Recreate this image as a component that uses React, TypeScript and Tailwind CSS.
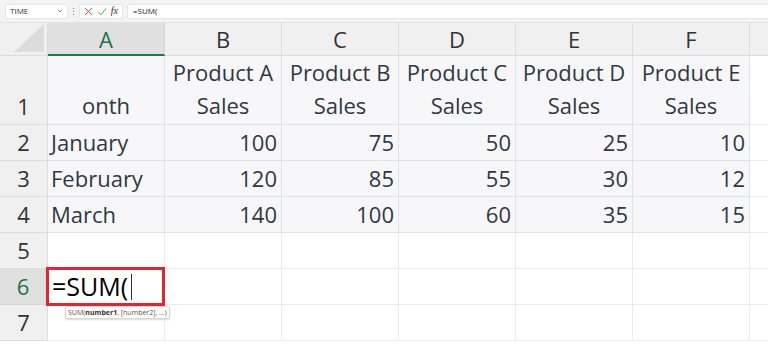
import { ChevronDown } from "lucide-react";

const COLS = ["A", "B", "C", "D", "E", "F"];

// 表のデータ（行1は見出し）
const HEAD = ["onth", "Product A Sales", "Product B Sales", "Product C Sales", "Product D Sales", "Product E Sales"];
const DATA: (string | number)[][] = [
  ["January", 100, 75, 50, 25, 10],
  ["February", 120, 85, 55, 30, 12],
  ["March", 140, 100, 60, 35, 15],
];

const FONT = { fontFamily: '"Open Sans", "Noto Sans", sans-serif' };

function FormulaBar() {
  return (
    <div className="flex h-[23px] items-center border-b border-[#e3e3e3] bg-[#f3f3f3] pl-[5px]">
      <div className="flex h-[15px] w-[63px] items-center justify-between rounded-[2px] border border-[#e6e6e6] bg-white pl-[4px] pr-[3px] text-[8px] text-[#333]">
        <span>TIME</span>
        <ChevronDown size={8} strokeWidth={2} className="text-[#555]" />
      </div>
      <span className="mx-[1px] w-[9px] text-center text-[9px] leading-none text-[#777]">⋮</span>
      <div className="flex h-[15px] w-[44px] items-center justify-around rounded-[2px] border border-[#e6e6e6] bg-white px-[2px]">
        <svg width="9" height="9" viewBox="0 0 10 10">
          <path d="M1 1 L9 9 M9 1 L1 9" stroke="#d8453e" strokeWidth="1.1" fill="none" />
        </svg>
        <svg width="10" height="9" viewBox="0 0 10 10">
          <path d="M1 5.5 L4 8.5 L9.5 1.5" stroke="#3fa45b" strokeWidth="1.1" fill="none" />
        </svg>
        <span className="text-[10px] italic leading-none text-[#333]" style={{ fontFamily: '"Liberation Serif", serif' }}>
          fx
        </span>
      </div>
      <div className="ml-[4px] flex h-[15px] flex-1 items-center rounded-l-[2px] border border-r-0 border-[#e6e6e6] bg-white pl-[5px] text-[8px] text-[#222]">
        =SUM(
      </div>
    </div>
  );
}

export default function App() {
  const rowHeights = [69, 36, 36, 36, 36, 36, 36];

  return (
    <div className="h-[345px] w-[768px] overflow-hidden bg-white" style={FONT}>
      <FormulaBar />

      <div className="grid grid-cols-[48px_repeat(6,117px)_1fr] grid-rows-[33px_69px_repeat(6,36px)_1fr]">
        {/* 左上コーナー */}
        <div className="flex items-end justify-end border-b border-r border-[#dcdcdc] bg-[#f0f0f0] pb-[3px] pr-[3px]">
          <div className="h-[28px] w-[30px] bg-[#dcdcdc] [clip-path:polygon(100%_0,100%_100%,0_100%)]" />
        </div>

        {/* 列見出し */}
        {COLS.map((c) => (
          <div
            key={c}
            className={
              c === "A"
                ? "flex items-center justify-center border-b-2 border-r border-b-[#1f7a45] border-r-[#d4d4d4] bg-[#e0e0e0] pt-[2px] text-[22px] text-[#1e7145]"
                : "flex items-center justify-center border-b border-r border-[#dcdcdc] bg-[#f0f0f0] text-[22px] text-[#333]"
            }
          >
            {c}
          </div>
        ))}
        <div className="border-b border-[#dcdcdc] bg-[#f0f0f0]" />

        {/* 行 1〜7 */}
        {rowHeights.map((_, ri) => {
          const rowNo = ri + 1;
          const isActive = rowNo === 6;
          const inTable = rowNo <= 4;
          const cells: (string | number)[] =
            rowNo === 1 ? HEAD : rowNo <= 4 ? DATA[rowNo - 2] : ["", "", "", "", "", ""];

          return [
            <div
              key={`h${rowNo}`}
              className={
                isActive
                  ? "flex items-end justify-center border-b border-r-2 border-b-[#d4d4d4] border-r-[#1f7a45] bg-[#e0e0e0] pb-[2px] text-[22px] leading-[32px] text-[#1e7145]"
                  : "flex items-end justify-center border-b border-r border-[#dcdcdc] bg-[#f0f0f0] pb-[2px] text-[22px] leading-[32px] text-[#333]"
              }
            >
              {rowNo}
            </div>,
            ...cells.map((v, ci) => {
              if (isActive && ci === 0) {
                return (
                  <div key={`c${rowNo}-${ci}`} className="relative border-b border-r border-[#ebebeb] bg-white">
                    <div className="absolute -left-[2px] -top-[2px] z-10 flex h-[39px] w-[119px] items-center border-[3px] border-[#e0262e] pl-[3px] text-[25px] leading-none text-black">
                      =SUM(
                      <span className="ml-[3px] h-[26px] w-px bg-[#333]" />
                    </div>
                    <div className="absolute left-[17px] top-[37px] z-20 whitespace-nowrap rounded-[2px] border border-[#d6d6d6] bg-white px-[2px] py-[1px] text-[7px] leading-[9px] text-[#555] shadow-[0_1px_2px_rgba(0,0,0,0.15)]">
                      SUM(<b className="text-[#333]">number1</b>, [number2], ...)
                    </div>
                  </div>
                );
              }
              const isNum = typeof v === "number";
              return (
                <div
                  key={`c${rowNo}-${ci}`}
                  className={[
                    "flex border-b border-r text-[22px] text-[#313843]",
                    inTable ? "border-[#e1e1e8] bg-[#f7f7f9]" : "border-[#ebebeb] bg-white",
                    rowNo === 1
                      ? "items-end justify-center pb-[2px] text-center leading-[33px]"
                      : isNum
                        ? "items-center justify-end pr-[4px]"
                        : "items-center justify-start pl-[3px]",
                  ].join(" ")}
                >
                  {v}
                </div>
              );
            }),
            <div key={`e${rowNo}`} className="border-b border-[#ebebeb] bg-white" />,
          ];
        })}
      </div>
    </div>
  );
}
